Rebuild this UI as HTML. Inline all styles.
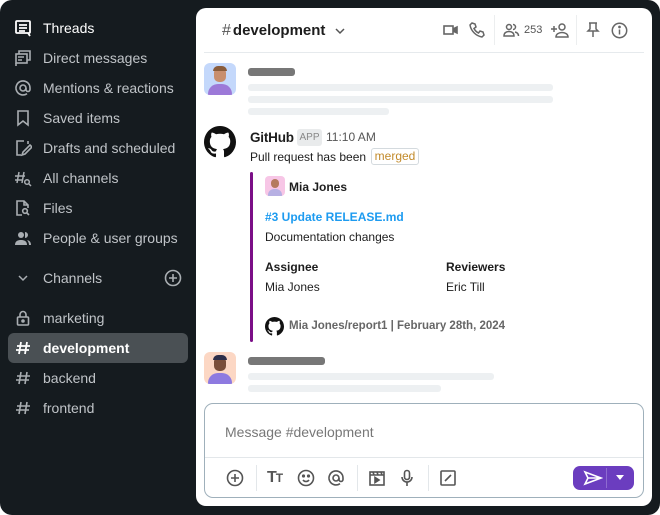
<!DOCTYPE html>
<html><head><meta charset="utf-8"><style>
*{margin:0;padding:0;box-sizing:border-box}
body{width:660px;height:515px;background:#fff;font-family:"Liberation Sans",sans-serif;overflow:hidden;position:relative}
.app{position:absolute;left:0;top:0;width:660px;height:515px;background:#151b1f;border-radius:12px}
.side{position:absolute;color:#c0c4c8;font-size:14px}
.row{position:absolute;left:0;height:30px;width:200px;display:flex;align-items:center}
.row .ic{position:absolute;left:14px;width:18px;height:18px}
.row span{position:absolute;left:43px;top:7px}
.sel{position:absolute;left:8px;top:333px;width:180px;height:30px;background:#4a5054;border-radius:6px}
.panel{position:absolute;left:196px;top:8px;width:456px;height:498px;background:#fff;border-radius:10px}
.a{position:absolute}
.sk{position:absolute;height:7px;border-radius:3px;background:#edf0f2}
.sk.d{background:#777;height:8px}
svg{display:block}
</style></head><body>
<div class="app">
<div class="side">
<div class="sel"></div>
<div class="row" style="top:13px;color:#fff"><svg class="ic" viewBox="0 0 18 18" fill="none" stroke="#fff" stroke-width="1.8"><rect x="2" y="2" width="14" height="12" rx="1"/><path d="M5 6h8M5 9h8M5 12h6M14 14l2 3"/></svg><span>Threads</span></div>
<div class="row" style="top:43px"><svg class="ic" viewBox="0 0 18 18" fill="none" stroke="#a9aeb2" stroke-width="1.6"><rect x="2" y="5" width="11" height="9"/><path d="M5 5V2h11v9h-3M4 8h6M4 11h4M2 14v3"/></svg><span>Direct messages</span></div>
<div class="row" style="top:73px"><svg class="ic" viewBox="0 0 18 18" fill="none" stroke="#a9aeb2" stroke-width="1.6"><circle cx="9" cy="9" r="3"/><path d="M12 9v1.5a2 2 0 004 0V9a7 7 0 10-3 5.7"/></svg><span>Mentions &amp; reactions</span></div>
<div class="row" style="top:103px"><svg class="ic" viewBox="0 0 18 18" fill="none" stroke="#a9aeb2" stroke-width="1.6"><path d="M4 2h10v14l-5-4-5 4z"/></svg><span>Saved items</span></div>
<div class="row" style="top:133px"><svg class="ic" viewBox="0 0 18 18" fill="none" stroke="#a9aeb2" stroke-width="1.6"><path d="M10 2H3v14h4M14 5V2M8 16l1-3 7-7 2 2-7 7z"/></svg><span>Drafts and scheduled</span></div>
<div class="row" style="top:163px"><svg class="ic" viewBox="0 0 18 18" fill="none" stroke="#a9aeb2" stroke-width="1.5"><path d="M5 3L3 14M10 3L8 14M1 7h10M1 11h7"/><circle cx="13" cy="13" r="2.3"/><path d="M15 15l2 2"/></svg><span>All channels</span></div>
<div class="row" style="top:193px"><svg class="ic" viewBox="0 0 18 18" fill="none" stroke="#a9aeb2" stroke-width="1.6"><path d="M8 16H3V2h7l4 4v3M10 2v4h4"/><circle cx="11" cy="12" r="2.3"/><path d="M13 14l2 2"/></svg><span>Files</span></div>
<div class="row" style="top:223px"><svg class="ic" viewBox="0 0 18 18" fill="#a9aeb2"><circle cx="7" cy="6" r="3"/><path d="M1 16c0-4 3-5 6-5s6 1 6 5z"/><path d="M11 3a3 3 0 010 6zM13 11c2 .5 4 1.5 4 5h-2c0-2-1-4-2-5z"/></svg><span>People &amp; user groups</span></div>
<div class="row" style="top:263px"><svg class="ic" viewBox="0 0 18 18" fill="none" stroke="#a9aeb2" stroke-width="1.5"><path d="M5 7l4 4 4-4"/></svg><span>Channels</span><svg style="position:absolute;left:164px;width:18px;height:18px" viewBox="0 0 18 18" fill="none" stroke="#a9aeb2" stroke-width="1.6"><circle cx="9" cy="9" r="7.5"/><path d="M9 5v8M5 9h8"/></svg></div>
<div class="row" style="top:303px"><svg class="ic" viewBox="0 0 18 18" fill="none" stroke="#a9aeb2" stroke-width="1.6"><rect x="3.5" y="8" width="11" height="8" rx="1"/><path d="M6 8V5.5a3 3 0 016 0V8"/><circle cx="9" cy="12" r="1" fill="#a9aeb2"/></svg><span>marketing</span></div>
<div class="row" style="top:333px;color:#fff;font-weight:bold"><svg class="ic" viewBox="0 0 18 18" fill="none" stroke="#fff" stroke-width="1.8"><path d="M7 3L5 15M13 3l-2 12M3 7h13M2 11h13"/></svg><span>development</span></div>
<div class="row" style="top:363px"><svg class="ic" viewBox="0 0 18 18" fill="none" stroke="#a9aeb2" stroke-width="1.6"><path d="M7 3L5 15M13 3l-2 12M3 7h13M2 11h13"/></svg><span>backend</span></div>
<div class="row" style="top:393px"><svg class="ic" viewBox="0 0 18 18" fill="none" stroke="#a9aeb2" stroke-width="1.6"><path d="M7 3L5 15M13 3l-2 12M3 7h13M2 11h13"/></svg><span>frontend</span></div>
</div>

<div class="panel">
<div class="a" style="left:26px;top:14px;font-size:15px;color:#1d1d1d"><span style="color:#555;font-size:16px">#</span><b style="margin-left:2px">development</b></div>
<svg class="a" style="left:138px;top:17px" width="12" height="12" viewBox="0 0 12 12" fill="none" stroke="#555" stroke-width="1.5"><path d="M2 4l4 4 4-4"/></svg>
<svg class="a" style="left:247px;top:15px" width="16" height="14" viewBox="0 0 16 14" fill="none" stroke="#666" stroke-width="1.6"><rect x="1" y="3" width="9" height="8"/><path d="M10 6l4-2v6l-4-2" fill="#666"/></svg>
<svg class="a" style="left:273px;top:14px" width="16" height="16" viewBox="0 0 16 16" fill="none" stroke="#666" stroke-width="1.5"><path d="M3 1l3 1 1 3-2 1.5c1 2 2.5 3.5 4.5 4.5L11 9l3 1 1 3-2 2C7 14 2 9 1 3z"/></svg>
<div class="a" style="left:298px;top:7px;width:1px;height:30px;background:#eceeef"></div>
<svg class="a" style="left:307px;top:15px" width="18" height="14" viewBox="0 0 18 14" fill="#666"><circle cx="6" cy="4" r="2.5" fill="none" stroke="#666" stroke-width="1.5"/><path d="M1 13c0-3 2-4.5 5-4.5s5 1.5 5 4.5z" fill="none" stroke="#666" stroke-width="1.5"/><path d="M10 1.5a2.5 2.5 0 010 5M12 9c2 .5 3.5 1.5 3.5 4" fill="none" stroke="#666" stroke-width="1.5"/></svg>
<div class="a" style="left:328px;top:16px;font-size:11px;color:#555">253</div>
<svg class="a" style="left:354px;top:14px" width="20" height="16" viewBox="0 0 20 16" fill="none" stroke="#666" stroke-width="1.5"><path d="M1 7h6M4 4v6"/><circle cx="12" cy="5" r="3"/><path d="M6 15c0-3 3-4.5 6-4.5s6 1.5 6 4.5z"/></svg>
<div class="a" style="left:380px;top:7px;width:1px;height:30px;background:#eceeef"></div>
<svg class="a" style="left:390px;top:14px" width="14" height="16" viewBox="0 0 14 16" fill="none" stroke="#666" stroke-width="1.5"><path d="M3 1h8M4 1v6l-2 2h10l-2-2V1M7 9v6"/></svg>
<svg class="a" style="left:415px;top:14px" width="17" height="17" viewBox="0 0 17 17" fill="none" stroke="#666" stroke-width="1.5"><circle cx="8.5" cy="8.5" r="7.2"/><path d="M8.5 7.5v5"/><circle cx="8.5" cy="5" r=".6" fill="#666"/></svg>
<div class="a" style="left:8px;top:44px;width:440px;height:1px;background:#e6eaed"></div>

<div class="a" style="left:8px;top:55px;width:32px;height:32px;border-radius:6px;background:#c4d8fb;overflow:hidden"><div style="position:absolute;left:10px;top:4px;width:12px;height:15px;background:#c88e6e;border-radius:6px 6px 5px 5px"></div><div style="position:absolute;left:9px;top:3px;width:14px;height:5px;background:#8a5c3b;border-radius:6px 6px 0 0"></div><div style="position:absolute;left:4px;top:21px;width:24px;height:14px;background:#9c79d8;border-radius:10px 10px 0 0"></div></div>
<div class="sk d" style="left:52px;top:60px;width:47px"></div>
<div class="sk" style="left:52px;top:76px;width:305px"></div>
<div class="sk" style="left:52px;top:88px;width:305px"></div>
<div class="sk" style="left:52px;top:100px;width:141px"></div>

<svg class="a" style="left:8px;top:118px" width="32" height="32" viewBox="0 0 16 16"><path fill="#111" d="M8 0C3.58 0 0 3.58 0 8c0 3.54 2.29 6.53 5.47 7.590.4.07.55-.17.55-.38 0-.19-.01-.82-.01-1.49-2.01.37-2.53-.49-2.69-.94-.09-.23-.48-.94-.82-1.13-.28-.15-.68-.52-.01-.53.63-.01 1.08.58 1.23.82.72 1.21 1.87.87 2.33.66.07-.52.28-.87.51-1.07-1.78-.2-3.64-.89-3.64-3.95 0-.87.31-1.59.82-2.15-.08-.2-.36-1.02.08-2.12 0 0 .67-.21 2.2.82.64-.18 1.32-.27 2-.27.68 0 1.36.09 2 .27 1.53-1.04 2.2-.82 2.2-.82.44 1.1.16 1.92.08 2.12.51.56.82 1.27.82 2.15 0 3.07-1.87 3.75-3.65 3.95.29.25.54.73.54 1.48 0 1.07-.01 1.93-.01 2.2 0 .21.15.46.55.38A8.013 8.013 0 0016 8c0-4.42-3.58-8-8-8z"/></svg>
<div class="a" style="left:54px;top:122px;font-size:13.5px;font-weight:bold;color:#1d1d1d;letter-spacing:-0.2px">GitHub</div>
<div class="a" style="left:101px;top:121px;width:25px;height:17px;background:#e9ebec;border-radius:3px;font-size:10px;color:#888;text-align:center;line-height:17px">APP</div>
<div class="a" style="left:130px;top:122px;font-size:12px;color:#555">11:10 AM</div>
<div class="a" style="left:54px;top:142px;font-size:12px;color:#1d1d1d">Pull request has been</div>
<div class="a" style="left:175px;top:140px;width:48px;height:17px;border:1px solid #d4dade;border-radius:3px;font-size:12px;color:#c28a2a;text-align:center;line-height:15px">merged</div>

<div class="a" style="left:54px;top:164px;width:3px;height:170px;background:#7b0f87;border-radius:2px"></div>
<div class="a" style="left:69px;top:168px;width:20px;height:20px;border-radius:4px;background:#f7c6e6;overflow:hidden"><div style="position:absolute;left:6px;top:3px;width:8px;height:9px;background:#b57a5e;border-radius:4px"></div><div style="position:absolute;left:3px;top:13px;width:14px;height:8px;background:#b7b0e3;border-radius:6px 6px 0 0"></div></div>
<div class="a" style="left:93px;top:172px;font-size:12px;font-weight:bold;color:#1d1d1d">Mia Jones</div>
<div class="a" style="left:69px;top:202px;font-size:12px;font-weight:bold;color:#1d9bf0">#3 Update RELEASE.md</div>
<div class="a" style="left:69px;top:222px;font-size:12px;color:#1d1d1d">Documentation changes</div>
<div class="a" style="left:69px;top:252px;font-size:12px;font-weight:bold;color:#1d1d1d">Assignee</div>
<div class="a" style="left:69px;top:272px;font-size:12px;color:#1d1d1d">Mia Jones</div>
<div class="a" style="left:250px;top:252px;font-size:12px;font-weight:bold;color:#1d1d1d">Reviewers</div>
<div class="a" style="left:250px;top:272px;font-size:12px;color:#1d1d1d">Eric Till</div>
<svg class="a" style="left:69px;top:309px" width="19" height="19" viewBox="0 0 16 16"><path fill="#111" d="M8 0C3.58 0 0 3.58 0 8c0 3.54 2.29 6.53 5.47 7.59.4.07.55-.17.55-.38 0-.19-.01-.82-.01-1.49-2.01.37-2.53-.49-2.69-.94-.09-.23-.48-.94-.82-1.13-.28-.15-.68-.52-.01-.53.63-.01 1.08.58 1.23.82.72 1.21 1.87.87 2.33.66.07-.52.28-.87.51-1.07-1.78-.2-3.64-.89-3.64-3.95 0-.87.31-1.59.82-2.15-.08-.2-.36-1.02.08-2.12 0 0 .67-.21 2.2.82.64-.18 1.32-.27 2-.27.68 0 1.36.09 2 .27 1.53-1.04 2.2-.82 2.2-.82.44 1.1.16 1.92.08 2.12.51.56.82 1.27.82 2.15 0 3.07-1.87 3.75-3.65 3.95.29.25.54.73.54 1.48 0 1.07-.01 1.93-.01 2.2 0 .21.15.46.55.38A8.013 8.013 0 0016 8c0-4.42-3.58-8-8-8z"/></svg>
<div class="a" style="left:93px;top:312px;font-size:11.5px;font-weight:bold;color:#666">Mia Jones/report1 | February 28th, 2024</div>

<div class="a" style="left:8px;top:344px;width:32px;height:32px;border-radius:6px;background:#fcd7c4;overflow:hidden"><div style="position:absolute;left:10px;top:4px;width:12px;height:15px;background:#7a4e3a;border-radius:6px 6px 5px 5px"></div><div style="position:absolute;left:9px;top:3px;width:14px;height:5px;background:#2e2f4a;border-radius:5px 5px 0 0"></div><div style="position:absolute;left:4px;top:21px;width:24px;height:14px;background:#8e7ae0;border-radius:10px 10px 0 0"></div></div>
<div class="sk d" style="left:52px;top:349px;width:77px"></div>
<div class="sk" style="left:52px;top:365px;width:246px"></div>
<div class="sk" style="left:52px;top:377px;width:193px"></div>

<div class="a" style="left:8px;top:395px;width:440px;height:95px;border:1px solid #9fb0bb;border-radius:9px">
<div class="a" style="left:20px;top:20px;font-size:14px;color:#777">Message #development</div>
<div class="a" style="left:0;top:53px;width:438px;height:1px;background:#e3e7ea"></div>
<svg class="a" style="left:21px;top:65px" width="18" height="18" viewBox="0 0 18 18" fill="none" stroke="#555" stroke-width="1.6"><circle cx="9" cy="9" r="7.5"/><path d="M9 5v8M5 9h8"/></svg>
<div class="a" style="left:51px;top:61px;width:1px;height:26px;background:#e3e7ea"></div>
<div class="a" style="left:62px;top:65px;font-size:16px;font-weight:bold;color:#555;letter-spacing:-1px">T<span style="font-size:12px">T</span></div>
<svg class="a" style="left:92px;top:65px" width="18" height="18" viewBox="0 0 18 18" fill="none" stroke="#555" stroke-width="1.6"><circle cx="9" cy="9" r="7.5"/><path d="M6 11c1.5 2 4.5 2 6 0"/><circle cx="6.5" cy="7" r=".8" fill="#555"/><circle cx="11.5" cy="7" r=".8" fill="#555"/></svg>
<svg class="a" style="left:122px;top:65px" width="18" height="18" viewBox="0 0 18 18" fill="none" stroke="#555" stroke-width="1.6"><circle cx="9" cy="9" r="3"/><path d="M12 9v1.5a2 2 0 004 0V9a7 7 0 10-3 5.7"/></svg>
<div class="a" style="left:152px;top:61px;width:1px;height:26px;background:#e3e7ea"></div>
<svg class="a" style="left:163px;top:65px" width="18" height="18" viewBox="0 0 18 18" fill="none" stroke="#555" stroke-width="1.6"><rect x="2" y="3" width="14" height="13"/><path d="M2 6h14M5 3l1 3M9 3l1 3M13 3l1 3"/><path d="M7 8.5v5l4-2.5z" fill="#555"/></svg>
<svg class="a" style="left:193px;top:65px" width="18" height="18" viewBox="0 0 18 18" fill="none" stroke="#555" stroke-width="1.6"><rect x="6.5" y="1.5" width="5" height="9" rx="2.5"/><path d="M4 8a5 5 0 0010 0M9 13v4"/></svg>
<div class="a" style="left:223px;top:61px;width:1px;height:26px;background:#e3e7ea"></div>
<svg class="a" style="left:234px;top:65px" width="18" height="18" viewBox="0 0 18 18" fill="none" stroke="#555" stroke-width="1.6"><rect x="2" y="2" width="14" height="14" rx="1"/><path d="M6 12l6-6"/></svg>
<div class="a" style="left:368px;top:62px;width:61px;height:24px;background:#6b3dbf;border-radius:7px"></div>
<div class="a" style="left:401px;top:64px;width:1px;height:20px;background:#8e6bd0"></div>
<svg class="a" style="left:378px;top:66px" width="20" height="16" viewBox="0 0 20 16" fill="none" stroke="#fff" stroke-width="1.6"><path d="M2 2l16 6-16 6 3-6zM5 8h13"/></svg>
<svg class="a" style="left:410px;top:71px" width="10" height="6" viewBox="0 0 10 6" fill="#fff"><path d="M1 0h8L5 5z"/></svg>
</div>
</div>
</div>
</body></html>
